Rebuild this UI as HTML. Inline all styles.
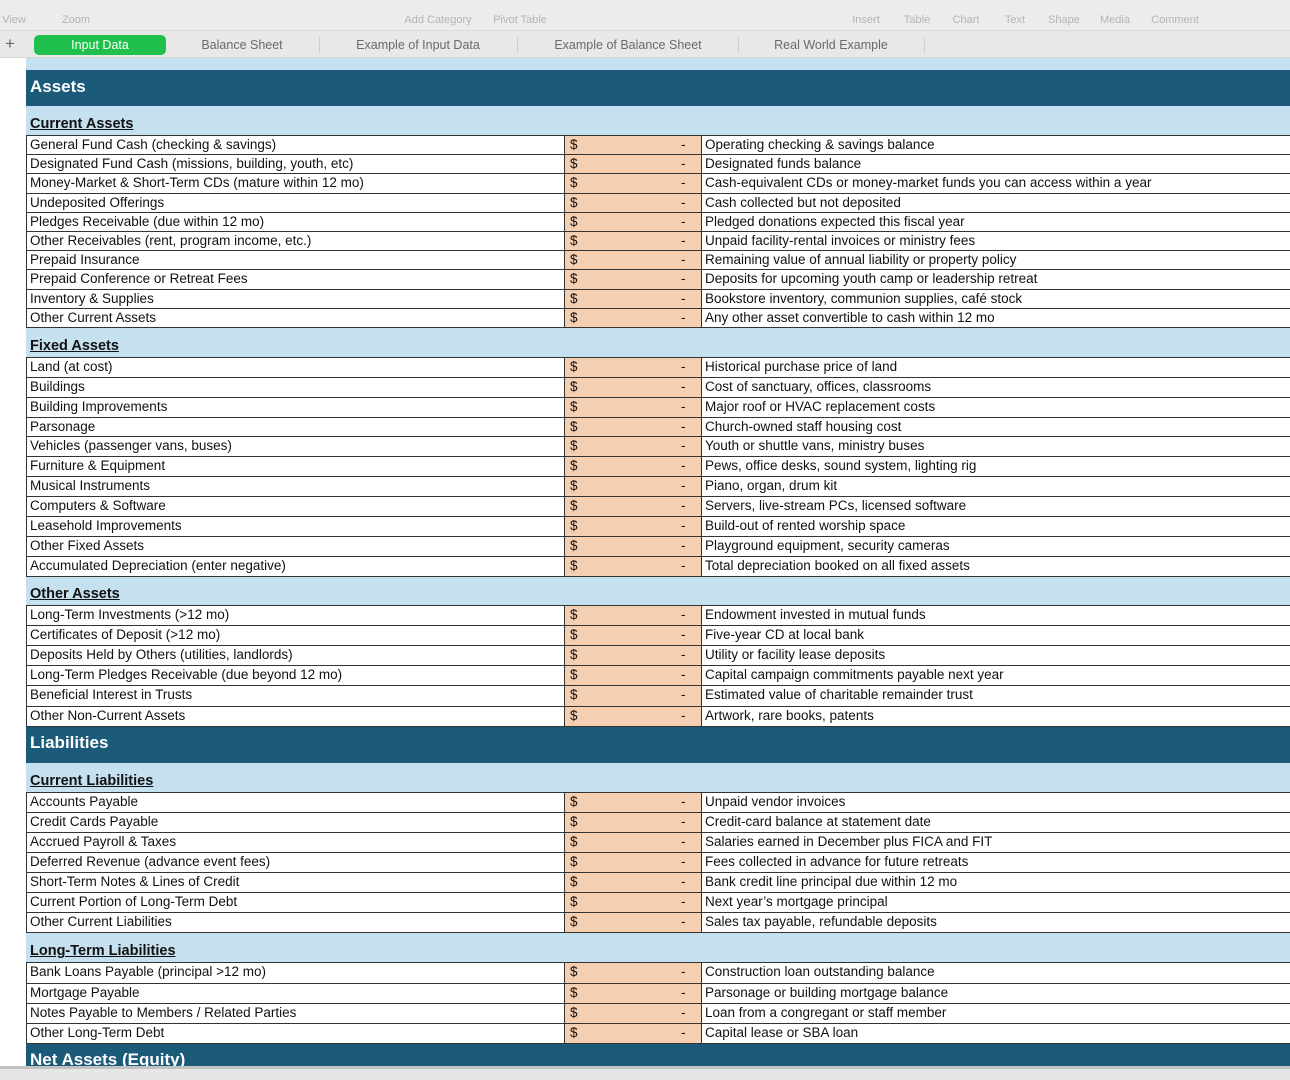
<!DOCTYPE html>
<html><head><meta charset="utf-8"><style>
*{margin:0;padding:0;box-sizing:border-box}
body{width:1290px;height:1080px;overflow:hidden;background:#fff;font-family:"Liberation Sans",sans-serif;position:relative}
.tb{position:absolute;left:0;top:0;width:1290px;height:30px;background:#ececec}
.tb span{position:absolute;top:14px;font-size:11px;color:#b4b4b4;transform:translateX(-50%)}
.tabs{position:absolute;left:0;top:30px;width:1290px;height:28px;background:#e8e8e8;border-top:1px solid #dcdcdc;border-bottom:1px solid #d6d6d6}
.tabs span{position:absolute;top:7px;font-size:12.5px;color:#6a6a6a;transform:translateX(-50%)}
.pill{position:absolute;left:34px;top:4px;width:132px;height:20px;background:#1fc04c;border-radius:5px;color:#fff;font-size:12.5px;text-align:center;line-height:20px}
.sep{position:absolute;top:6px;width:1px;height:16px;background:#d0d0d0}
.sheet{position:absolute;left:26px;top:58px;width:1264px}
.band{height:12px;background:#c5e1ef}
.hd{background:#1c5a7a;color:#fff;font-weight:bold;font-size:17px;padding-left:4px}
.sub{background:#c5e1ef;font-weight:bold;font-size:14.5px;padding-left:4px;color:#111;position:relative}
.sub b{position:absolute;bottom:3px;left:4px;text-decoration:underline}
.row{position:relative;font-size:13.5px;color:#111;border-bottom:1px solid #333;background:#fff}
.row div{position:absolute;top:0;bottom:0;line-height:inherit}
.c1{left:0;width:538px;border-left:1px solid #333;padding-left:3px}
.c2{left:538px;width:138px;background:#f5cfb2;border-left:1px solid #333;border-right:1px solid #333}
.c2 i{position:absolute;left:5px;font-style:normal}
.c2 em{position:absolute;left:116px;font-style:normal}
.c3{left:676px;right:0;padding-left:3px}
.first{border-top:1px solid #333}
.foot{position:absolute;left:0;top:1066px;width:1290px;height:14px;background:#e6e6e6;border-top:3px solid #c2c2c2}
</style></head><body>
<div class="tb">
<span style="left:14px">View</span><span style="left:76px">Zoom</span><span style="left:438px">Add Category</span><span style="left:520px">Pivot Table</span><span style="left:866px">Insert</span><span style="left:917px">Table</span><span style="left:966px">Chart</span><span style="left:1015px">Text</span><span style="left:1064px">Shape</span><span style="left:1115px">Media</span><span style="left:1175px">Comment</span>
</div>
<div class="tabs">
<span style="left:10px;top:3px;font-size:17px">+</span>
<div class="pill">Input Data</div>
<span style="left:242px">Balance Sheet</span><div class="sep" style="left:319px"></div>
<span style="left:418px">Example of Input Data</span><div class="sep" style="left:517px"></div>
<span style="left:628px">Example of Balance Sheet</span><div class="sep" style="left:738px"></div>
<span style="left:831px">Real World Example</span><div class="sep" style="left:924px"></div>
</div>
<div class="sheet" id="s">
<div class="band"></div>
<div class="hd" style="height:36px;line-height:34px">Assets</div>
<div class="sub" style="height:29px"><b>Current Assets</b></div>
<div class="first"></div>
<div class="row" style="height:19.2px;line-height:18px"><div class="c1">General Fund Cash (checking &amp; savings)</div><div class="c2"><i>$</i><em>-</em></div><div class="c3">Operating checking &amp; savings balance</div></div>
<div class="row" style="height:19.2px;line-height:18px"><div class="c1">Designated Fund Cash (missions, building, youth, etc)</div><div class="c2"><i>$</i><em>-</em></div><div class="c3">Designated funds balance</div></div>
<div class="row" style="height:19.2px;line-height:18px"><div class="c1">Money-Market &amp; Short-Term CDs (mature within 12 mo)</div><div class="c2"><i>$</i><em>-</em></div><div class="c3">Cash-equivalent CDs or money-market funds you can access within a year</div></div>
<div class="row" style="height:19.2px;line-height:18px"><div class="c1">Undeposited Offerings</div><div class="c2"><i>$</i><em>-</em></div><div class="c3">Cash collected but not deposited</div></div>
<div class="row" style="height:19.2px;line-height:18px"><div class="c1">Pledges Receivable (due within 12 mo)</div><div class="c2"><i>$</i><em>-</em></div><div class="c3">Pledged donations expected this fiscal year</div></div>
<div class="row" style="height:19.2px;line-height:18px"><div class="c1">Other Receivables (rent, program income, etc.)</div><div class="c2"><i>$</i><em>-</em></div><div class="c3">Unpaid facility-rental invoices or ministry fees</div></div>
<div class="row" style="height:19.2px;line-height:18px"><div class="c1">Prepaid Insurance</div><div class="c2"><i>$</i><em>-</em></div><div class="c3">Remaining value of annual liability or property policy</div></div>
<div class="row" style="height:19.2px;line-height:18px"><div class="c1">Prepaid Conference or Retreat Fees</div><div class="c2"><i>$</i><em>-</em></div><div class="c3">Deposits for upcoming youth camp or leadership retreat</div></div>
<div class="row" style="height:19.2px;line-height:18px"><div class="c1">Inventory &amp; Supplies</div><div class="c2"><i>$</i><em>-</em></div><div class="c3">Bookstore inventory, communion supplies, café stock</div></div>
<div class="row" style="height:19.2px;line-height:18px"><div class="c1">Other Current Assets</div><div class="c2"><i>$</i><em>-</em></div><div class="c3">Any other asset convertible to cash within 12 mo</div></div>
<div class="sub" style="height:29px"><b>Fixed Assets</b></div>
<div class="first"></div>
<div class="row" style="height:19.9px;line-height:18px"><div class="c1">Land (at cost)</div><div class="c2"><i>$</i><em>-</em></div><div class="c3">Historical purchase price of land</div></div>
<div class="row" style="height:19.9px;line-height:18px"><div class="c1">Buildings</div><div class="c2"><i>$</i><em>-</em></div><div class="c3">Cost of sanctuary, offices, classrooms</div></div>
<div class="row" style="height:19.9px;line-height:18px"><div class="c1">Building Improvements</div><div class="c2"><i>$</i><em>-</em></div><div class="c3">Major roof or HVAC replacement costs</div></div>
<div class="row" style="height:19.9px;line-height:18px"><div class="c1">Parsonage</div><div class="c2"><i>$</i><em>-</em></div><div class="c3">Church-owned staff housing cost</div></div>
<div class="row" style="height:19.9px;line-height:18px"><div class="c1">Vehicles (passenger vans, buses)</div><div class="c2"><i>$</i><em>-</em></div><div class="c3">Youth or shuttle vans, ministry buses</div></div>
<div class="row" style="height:19.9px;line-height:18px"><div class="c1">Furniture &amp; Equipment</div><div class="c2"><i>$</i><em>-</em></div><div class="c3">Pews, office desks, sound system, lighting rig</div></div>
<div class="row" style="height:19.9px;line-height:18px"><div class="c1">Musical Instruments</div><div class="c2"><i>$</i><em>-</em></div><div class="c3">Piano, organ, drum kit</div></div>
<div class="row" style="height:19.9px;line-height:18px"><div class="c1">Computers &amp; Software</div><div class="c2"><i>$</i><em>-</em></div><div class="c3">Servers, live-stream PCs, licensed software</div></div>
<div class="row" style="height:19.9px;line-height:18px"><div class="c1">Leasehold Improvements</div><div class="c2"><i>$</i><em>-</em></div><div class="c3">Build-out of rented worship space</div></div>
<div class="row" style="height:19.9px;line-height:18px"><div class="c1">Other Fixed Assets</div><div class="c2"><i>$</i><em>-</em></div><div class="c3">Playground equipment, security cameras</div></div>
<div class="row" style="height:19.9px;line-height:18px"><div class="c1">Accumulated Depreciation (enter negative)</div><div class="c2"><i>$</i><em>-</em></div><div class="c3">Total depreciation booked on all fixed assets</div></div>
<div class="sub" style="height:28px"><b>Other Assets</b></div>
<div class="first"></div>
<div class="row" style="height:20.2px;line-height:18px"><div class="c1">Long-Term Investments (&gt;12 mo)</div><div class="c2"><i>$</i><em>-</em></div><div class="c3">Endowment invested in mutual funds</div></div>
<div class="row" style="height:20.2px;line-height:18px"><div class="c1">Certificates of Deposit (&gt;12 mo)</div><div class="c2"><i>$</i><em>-</em></div><div class="c3">Five-year CD at local bank</div></div>
<div class="row" style="height:20.2px;line-height:18px"><div class="c1">Deposits Held by Others (utilities, landlords)</div><div class="c2"><i>$</i><em>-</em></div><div class="c3">Utility or facility lease deposits</div></div>
<div class="row" style="height:20.2px;line-height:18px"><div class="c1">Long-Term Pledges Receivable (due beyond 12 mo)</div><div class="c2"><i>$</i><em>-</em></div><div class="c3">Capital campaign commitments payable next year</div></div>
<div class="row" style="height:20.2px;line-height:18px"><div class="c1">Beneficial Interest in Trusts</div><div class="c2"><i>$</i><em>-</em></div><div class="c3">Estimated value of charitable remainder trust</div></div>
<div class="row" style="height:20.2px;line-height:18px"><div class="c1">Other Non-Current Assets</div><div class="c2"><i>$</i><em>-</em></div><div class="c3">Artwork, rare books, patents</div></div>
<div class="hd" style="height:36px;line-height:32px">Liabilities</div>
<div class="sub" style="height:29px"><b>Current Liabilities</b></div>
<div class="first"></div>
<div class="row" style="height:20.1px;line-height:18px"><div class="c1">Accounts Payable</div><div class="c2"><i>$</i><em>-</em></div><div class="c3">Unpaid vendor invoices</div></div>
<div class="row" style="height:20.1px;line-height:18px"><div class="c1">Credit Cards Payable</div><div class="c2"><i>$</i><em>-</em></div><div class="c3">Credit-card balance at statement date</div></div>
<div class="row" style="height:20.1px;line-height:18px"><div class="c1">Accrued Payroll &amp; Taxes</div><div class="c2"><i>$</i><em>-</em></div><div class="c3">Salaries earned in December plus FICA and FIT</div></div>
<div class="row" style="height:20.1px;line-height:18px"><div class="c1">Deferred Revenue (advance event fees)</div><div class="c2"><i>$</i><em>-</em></div><div class="c3">Fees collected in advance for future retreats</div></div>
<div class="row" style="height:20.1px;line-height:18px"><div class="c1">Short-Term Notes &amp; Lines of Credit</div><div class="c2"><i>$</i><em>-</em></div><div class="c3">Bank credit line principal due within 12 mo</div></div>
<div class="row" style="height:20.1px;line-height:18px"><div class="c1">Current Portion of Long-Term Debt</div><div class="c2"><i>$</i><em>-</em></div><div class="c3">Next year’s mortgage principal</div></div>
<div class="row" style="height:20.1px;line-height:18px"><div class="c1">Other Current Liabilities</div><div class="c2"><i>$</i><em>-</em></div><div class="c3">Sales tax payable, refundable deposits</div></div>
<div class="sub" style="height:29px"><b>Long-Term Liabilities</b></div>
<div class="first"></div>
<div class="row" style="height:20.2px;line-height:18px"><div class="c1">Bank Loans Payable (principal &gt;12 mo)</div><div class="c2"><i>$</i><em>-</em></div><div class="c3">Construction loan outstanding balance</div></div>
<div class="row" style="height:20.2px;line-height:18px"><div class="c1">Mortgage Payable</div><div class="c2"><i>$</i><em>-</em></div><div class="c3">Parsonage or building mortgage balance</div></div>
<div class="row" style="height:20.2px;line-height:18px"><div class="c1">Notes Payable to Members / Related Parties</div><div class="c2"><i>$</i><em>-</em></div><div class="c3">Loan from a congregant or staff member</div></div>
<div class="row" style="height:20.2px;line-height:18px"><div class="c1">Other Long-Term Debt</div><div class="c2"><i>$</i><em>-</em></div><div class="c3">Capital lease or SBA loan</div></div>
<div class="hd" style="height:30px;line-height:32px">Net Assets (Equity)</div>
</div>
<div class="foot"></div>
</body></html>
